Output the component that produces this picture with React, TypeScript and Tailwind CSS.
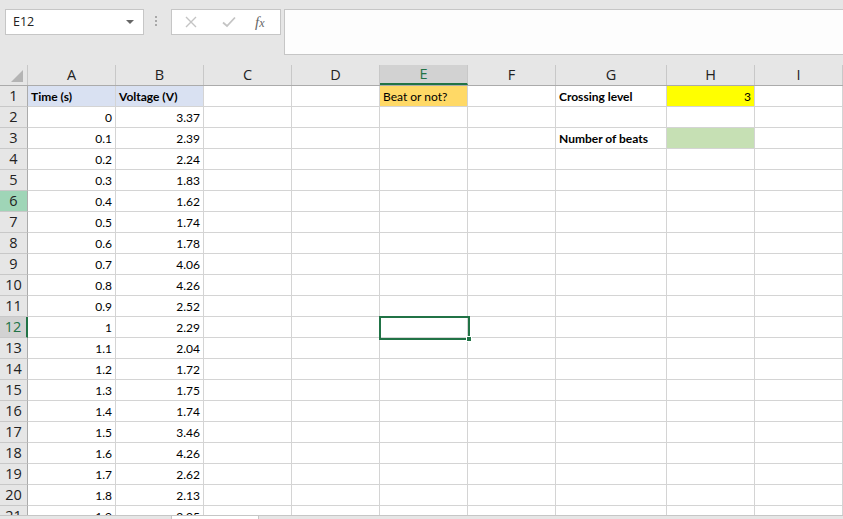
import React from "react";

const cols = [
  { k: "A", w: "w-[88px]" },
  { k: "B", w: "w-[88px]" },
  { k: "C", w: "w-[88px]" },
  { k: "D", w: "w-[88px]" },
  { k: "E", w: "w-[88px]" },
  { k: "F", w: "w-[88px]" },
  { k: "G", w: "w-[111px]" },
  { k: "H", w: "w-[88px]" },
  { k: "I", w: "w-[88px]" },
];

const times = ["0", "0.1", "0.2", "0.3", "0.4", "0.5", "0.6", "0.7", "0.8", "0.9", "1", "1.1", "1.2", "1.3", "1.4", "1.5", "1.6", "1.7", "1.8", "1.9"];
const volts = ["3.37", "2.39", "2.24", "1.83", "1.62", "1.74", "1.78", "4.06", "4.26", "2.52", "2.29", "2.04", "1.72", "1.75", "1.74", "3.46", "4.26", "2.62", "2.13", "2.05"];

type Cell = { v?: string; bg?: string; bold?: boolean; right?: boolean };

function cellAt(row: number, col: string): Cell {
  if (row === 1) {
    if (col === "A") return { v: "Time (s)", bg: "bg-[#d9e1f2]", bold: true };
    if (col === "B") return { v: "Voltage (V)", bg: "bg-[#d9e1f2]", bold: true };
    if (col === "E") return { v: "Beat or not?", bg: "bg-[#ffd966]" };
    if (col === "G") return { v: "Crossing level", bold: true };
    if (col === "H") return { v: "3", bg: "bg-[#ffff00]", right: true };
    return {};
  }
  if (row === 3 && col === "G") return { v: "Number of beats", bold: true };
  if (row === 3 && col === "H") return { bg: "bg-[#c6e0b4]" };
  if (col === "A") return { v: times[row - 2], right: true };
  if (col === "B") return { v: volts[row - 2], right: true };
  return {};
}

function FormulaBar() {
  return (
    <div className="flex h-[65px] items-start bg-[#e6e6e6] pt-[9px]">
      <div className="ml-[5px] flex h-[26px] w-[139px] items-center justify-between border border-[#c6c6c6] bg-white pl-[7px] pr-[9px]">
        <span className="font-['Open_Sans',sans-serif] text-[12.5px] text-[#222]">E12</span>
        <span className="h-0 w-0 border-x-[4px] border-t-[4px] border-x-transparent border-t-[#666]" />
      </div>
      <div className="ml-[11px] mt-[7px] flex flex-col gap-[2px]">
        <span className="h-[2px] w-[2px] bg-[#a8a8a8]" />
        <span className="h-[2px] w-[2px] bg-[#a8a8a8]" />
        <span className="h-[2px] w-[2px] bg-[#a8a8a8]" />
      </div>
      <div className="ml-[14px] flex h-[26px] w-[110px] items-center border border-[#c6c6c6] bg-white">
        <svg className="ml-[13px]" width="12" height="12" viewBox="0 0 12 12">
          <path d="M1 1 L11 11 M11 1 L1 11" stroke="#c4c4c4" strokeWidth="1.4" />
        </svg>
        <svg className="ml-[25px]" width="14" height="12" viewBox="0 0 14 12">
          <path d="M1 6.5 L5 10 L13 1.5" stroke="#c4c4c4" strokeWidth="1.8" fill="none" />
        </svg>
        <span className="ml-[19px] font-['Liberation_Serif',serif] text-[15px] italic leading-none text-[#666]">
          f<span className="text-[12px]">x</span>
        </span>
      </div>
      <div className="ml-[3px] h-[46px] flex-1 border border-r-0 border-[#c6c6c6] bg-[#fdfdfd]" />
    </div>
  );
}

export default function App() {
  const rows = Array.from({ length: 21 }, (_, i) => i + 1);
  return (
    <div className="relative h-[519px] w-[843px] overflow-hidden bg-[#e6e6e6] font-['Lato','Noto_Sans',sans-serif]">
      <FormulaBar />
      <div className="relative h-[450px] overflow-hidden bg-white">
        {/* column headers */}
        <div className="flex h-[21px] border-b border-[#ababab] bg-[#e6e6e6]">
          <div className="relative w-[28px] shrink-0 border-r border-[#c8c8c8]">
            <span className="absolute bottom-[3px] right-[4px] h-0 w-0 border-b-[12px] border-l-[12px] border-b-[#b4b4b4] border-l-transparent" />
          </div>
          {cols.map((c) => (
            <div
              key={c.k}
              className={`${c.w} flex shrink-0 items-center justify-center border-r border-[#c8c8c8] font-['Open_Sans',sans-serif] text-[14.5px] ${
                c.k === "E" ? "border-b-2 border-b-[#217346] bg-[#d2d2d2] text-[#217346]" : "text-[#222]"
              }`}
            >
              {c.k}
            </div>
          ))}
        </div>
        {rows.map((r) => (
          <div key={r} className="flex h-[21px]">
            <div
              className={`flex w-[28px] shrink-0 items-center justify-center border-b border-r font-['Open_Sans',sans-serif] text-[14.5px] ${
                r === 12
                  ? "border-b-[#c8c8c8] border-r-2 border-r-[#217346] bg-[#d2d2d2] text-[#217346]"
                  : r === 6
                  ? "border-[#c8c8c8] border-r-[#ababab] bg-[#9fd5b7] text-[#222]"
                  : "border-[#c8c8c8] border-r-[#ababab] bg-[#e6e6e6] text-[#222]"
              }`}
            >
              {r}
            </div>
            {cols.map((c) => {
              const cell = cellAt(r, c.k);
              return (
                <div
                  key={c.k}
                  className={`${c.w} flex shrink-0 items-end overflow-hidden whitespace-nowrap border-b border-r border-[#d4d4d4] px-[3px] pb-[2px] text-[12px] leading-[15px] text-black ${
                    cell.bg ?? ""
                  } ${cell.right ? "justify-end" : "justify-start"} ${cell.bold ? "font-bold" : ""}`}
                >
                  {cell.v}
                </div>
              );
            })}
          </div>
        ))}
        {/* active cell E12 */}
        <div className="absolute left-[379px] top-[251px] h-[24px] w-[91px] border-2 border-[#217346]">
          <span className="absolute -bottom-[4px] -right-[4px] h-[6px] w-[6px] border border-white bg-[#217346]" />
        </div>
      </div>
      {/* bottom bar */}
      <div className="flex h-[4px] border-t border-[#c6c6c6] bg-[#e6e6e6]">
        <div className="w-[171px]" />
        <div className="w-[88px] border-x border-[#c6c6c6] bg-white" />
        <div className="flex-1 bg-[#e6e6e6]" />
      </div>
    </div>
  );
}
